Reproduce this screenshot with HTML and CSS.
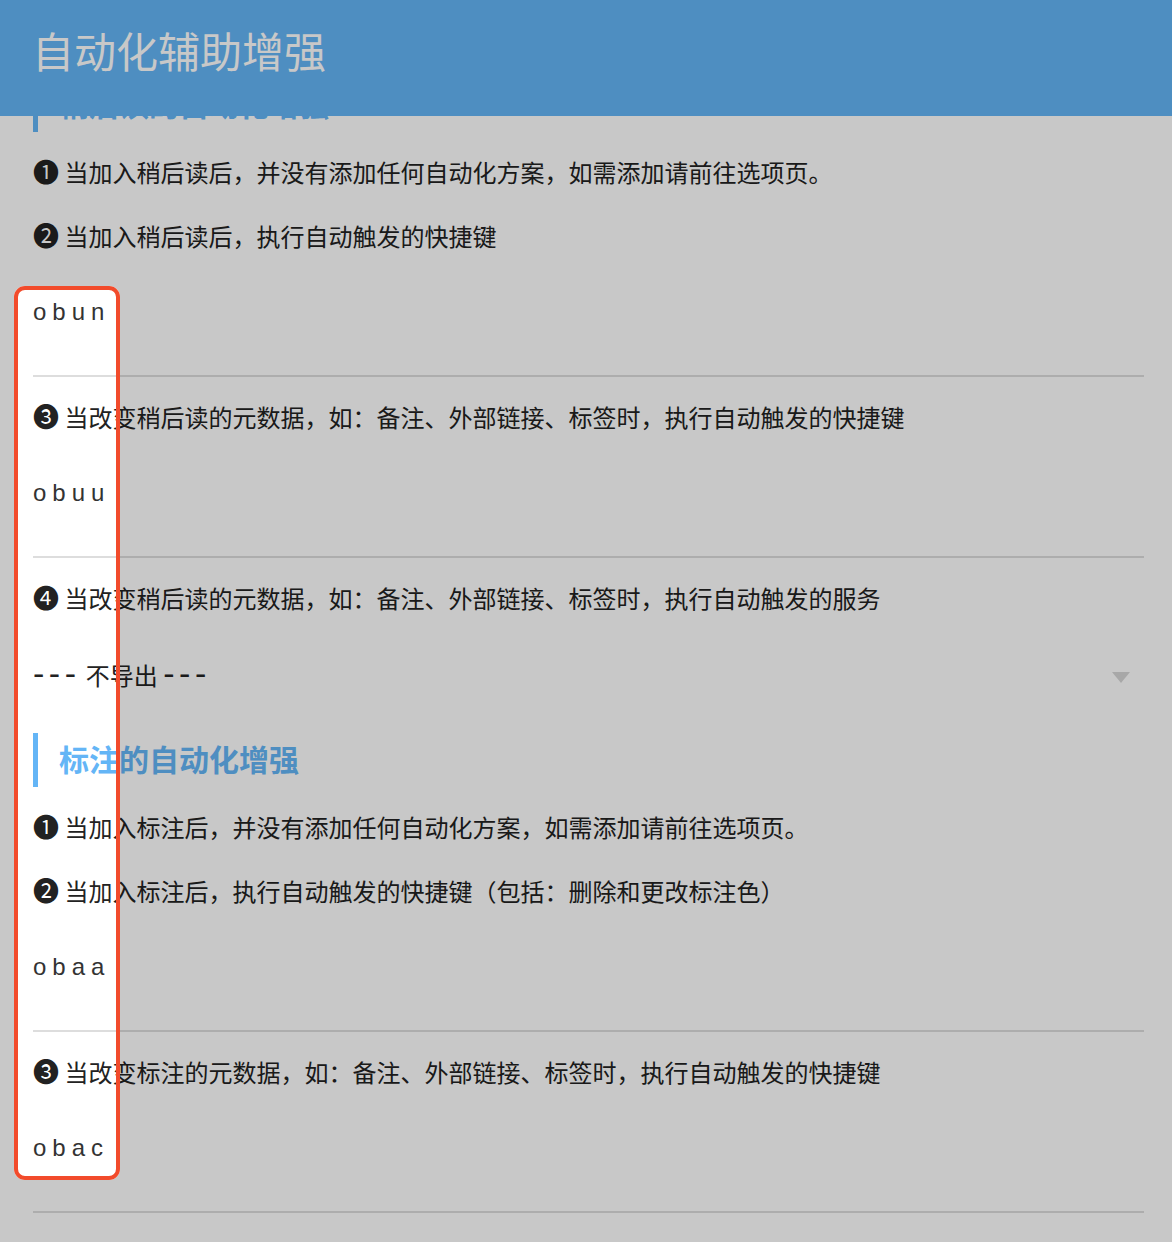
FILE: index.html
```html
<!DOCTYPE html>
<html lang="zh-CN">
<head>
<meta charset="utf-8">
<title>自动化辅助增强</title>
<link rel="stylesheet" href="styles.css">
</head>
<body>
<header class="topbar">
  <h1 class="topbar-title">自动化辅助增强</h1>
</header>

<main class="content">
  <h2 class="section-title">稍后读的自动化增强</h2>
  <p class="label"><span class="num">❶</span> 当加入稍后读后，并没有添加任何自动化方案，如需添加请前往选项页。</p>
  <p class="label label-next"><span class="num">❷</span> 当加入稍后读后，执行自动触发的快捷键</p>
  <div class="field"><span class="keys">obun</span></div>
  <p class="label label-after-field"><span class="num">❸</span> 当改变稍后读的元数据，如：备注、外部链接、标签时，执行自动触发的快捷键</p>
  <div class="field"><span class="keys">obuu</span></div>
  <p class="label label-after-field"><span class="num">❹</span> 当改变稍后读的元数据，如：备注、外部链接、标签时，执行自动触发的服务</p>
  <div class="select">
    <span class="select-value"><span class="dash">---</span> 不导出 <span class="dash">---</span></span>
    <span class="select-arrow"></span>
  </div>

  <h2 class="section-title section-title-next">标注的自动化增强</h2>
  <p class="label"><span class="num">❶</span> 当加入标注后，并没有添加任何自动化方案，如需添加请前往选项页。</p>
  <p class="label label-next"><span class="num">❷</span> 当加入标注后，执行自动触发的快捷键（包括：删除和更改标注色）</p>
  <div class="field"><span class="keys">obaa</span></div>
  <p class="label label-after-field"><span class="num">❸</span> 当改变标注的元数据，如：备注、外部链接、标签时，执行自动触发的快捷键</p>
  <div class="field"><span class="keys">obac</span></div>
</main>

<div class="spotlight"></div>
</body>
</html>
```

FILE: styles.css
```css
html, body {
  margin: 0;
  padding: 0;
  background: #ffffff;
}

body {
  position: relative;
  min-height: 1242px;
  overflow: hidden;
  font-family: "Noto Sans CJK SC", "DejaVu Sans", sans-serif;
  color: #222222;
}

.topbar {
  position: fixed;
  top: 0;
  left: 0;
  right: 0;
  height: 116px;
  background: #64b5f6;
  z-index: 10;
  box-sizing: border-box;
  padding: 20px 0 0 32px;
}

.topbar-title {
  margin: 0;
  font-size: 42px;
  line-height: 60px;
  font-weight: 400;
  color: #ffffff;
}

.content {
  padding: 78px 28px 60px 33px;
}

.section-title {
  margin: 0;
  height: 54px;
  box-sizing: border-box;
  line-height: 50px;
  padding-bottom: 4px;
  border-left: 5px solid #64b5f6;
  padding-left: 21px;
  font-size: 30px;
  font-weight: 700;
  color: #64b5f6;
}

.section-title-next {
  margin-top: 43px;
}

.label {
  margin: 22px 0 0 0;
  padding-bottom: 2px;
  height: 36px;
  font-size: 24px;
  line-height: 36px;
  color: #222222;
  white-space: nowrap;
}

.num {
  font-size: 26px;
  line-height: 0;
}

.label-next {
  margin-top: 26px;
}

.label-after-field {
  margin-top: 22px;
}

.field {
  height: 30px;
  padding: 41px 0 48px 0;
  border-bottom: 2px solid #dddddd;
  line-height: 30px;
}

.keys {
  font-family: "Liberation Sans", "Noto Sans CJK SC", sans-serif;
  font-size: 24px;
  letter-spacing: 6px;
  color: #333333;
}

.select {
  display: flex;
  align-items: flex-start;
  justify-content: space-between;
  padding: 42px 14px 0 0;
  height: 30px;
  line-height: 30px;
  font-size: 24px;
  color: #222222;
}

.select-value {
  line-height: 30px;
  white-space: nowrap;
}

.dash {
  font-family: "Liberation Sans", sans-serif;
  font-size: 34px;
  line-height: 0;
  letter-spacing: 4.5px;
}

.select-arrow {
  margin-top: 12px;
  width: 0;
  height: 0;
  border-left: 9px solid transparent;
  border-right: 9px solid transparent;
  border-top: 11px solid #d7d7d7;
}

.spotlight {
  position: absolute;
  left: 14px;
  top: 286px;
  width: 106px;
  height: 894px;
  box-sizing: border-box;
  border: 4px solid #f24b2b;
  border-radius: 11px;
  box-shadow: 0 0 0 3000px rgba(0, 0, 0, 0.216);
  z-index: 20;
  pointer-events: none;
}
```
